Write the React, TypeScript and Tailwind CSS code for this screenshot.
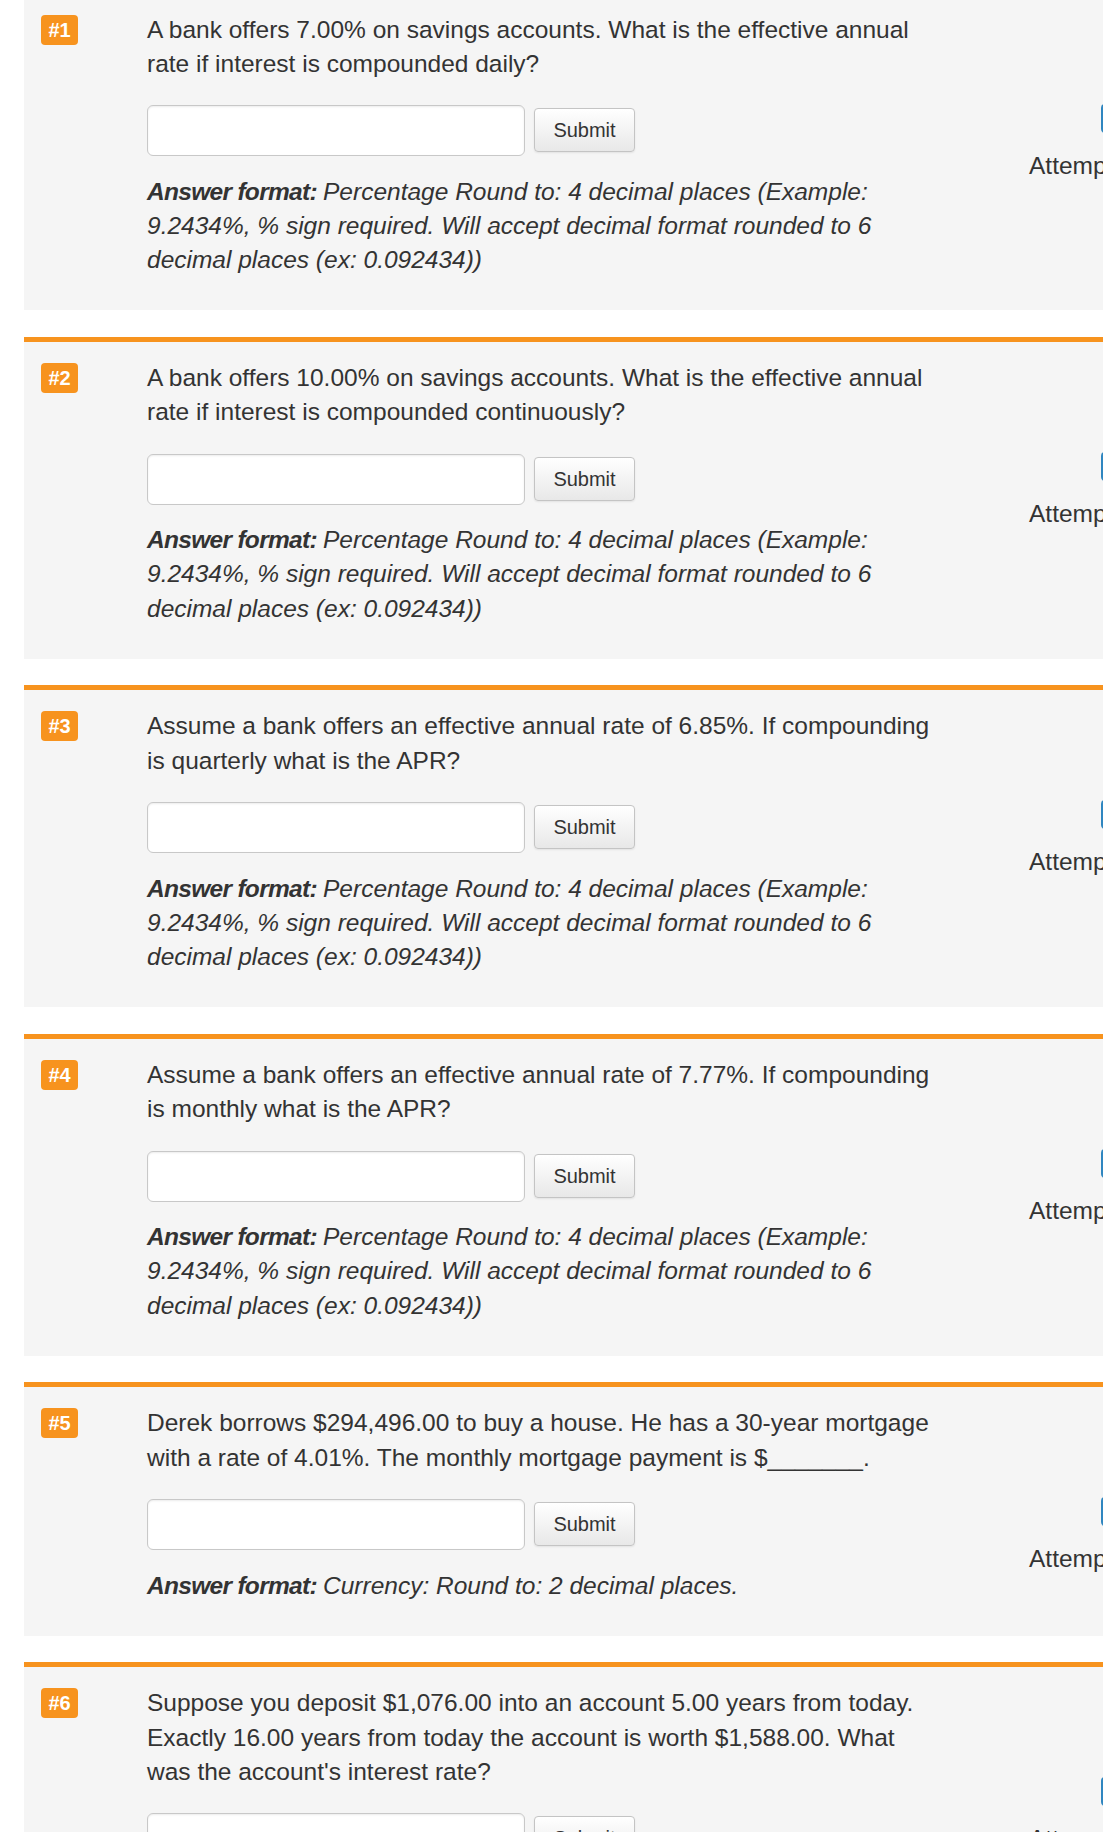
import React from "react";

type Q = {
  n: number;
  q: string[];
  a: string[];
};

const pct = [
  "Percentage Round to: 4 decimal places (Example:",
  "9.2434%, % sign required. Will accept decimal format rounded to 6",
  "decimal places (ex: 0.092434))",
];

const questions: Q[] = [
  {
    n: 1,
    q: [
      "A bank offers 7.00% on savings accounts. What is the effective annual",
      "rate if interest is compounded daily?",
    ],
    a: pct,
  },
  {
    n: 2,
    q: [
      "A bank offers 10.00% on savings accounts. What is the effective annual",
      "rate if interest is compounded continuously?",
    ],
    a: pct,
  },
  {
    n: 3,
    q: [
      "Assume a bank offers an effective annual rate of 6.85%. If compounding",
      "is quarterly what is the APR?",
    ],
    a: pct,
  },
  {
    n: 4,
    q: [
      "Assume a bank offers an effective annual rate of 7.77%. If compounding",
      "is monthly what is the APR?",
    ],
    a: pct,
  },
  {
    n: 5,
    q: [
      "Derek borrows $294,496.00 to buy a house. He has a 30-year mortgage",
      "with a rate of 4.01%. The monthly mortgage payment is $_______.",
    ],
    a: ["Currency: Round to: 2 decimal places."],
  },
  {
    n: 6,
    q: [
      "Suppose you deposit $1,076.00 into an account 5.00 years from today.",
      "Exactly 16.00 years from today the account is worth $1,588.00. What",
      "was the account's interest rate?",
    ],
    a: pct,
  },
];

function Card({ item }: { item: Q }) {
  return (
    <div className="w-[1240px] mb-[26.5px]">
      <div className="h-[5px] bg-[#f7931e]" />
      <div className="bg-[#f5f5f5] flex pt-[19px] pb-[33px]">
        <div className="w-[123px] pl-[17px] shrink-0">
          <div className="mt-[2px] w-[37px] h-[30px] rounded-[4px] bg-[#f7931e] text-white font-bold text-[20px] leading-[30px] text-center">
            #{item.n}
          </div>
        </div>
        <div className="w-[790px] shrink-0">
          <div className="text-[24.5px] leading-[34.3px] text-[#333333] whitespace-nowrap">
            {item.q.map((l, i) => (
              <div key={i}>{l}</div>
            ))}
          </div>
          <div className="mt-[24px] flex items-start">
            <input
              type="text"
              className="w-[378px] h-[51px] bg-white border border-[#c8c8c8] rounded-[6px] shadow-[inset_0_1px_2px_rgba(0,0,0,0.08)] outline-none"
            />
            <button className="ml-[9px] mt-[3px] w-[101px] h-[44px] rounded-[4px] border border-[#c4c4c4] bg-gradient-to-b from-white to-[#e8e8e8] text-[20px] text-[#333333] shadow-[0_1px_2px_rgba(0,0,0,0.08)]">
              Submit
            </button>
          </div>
          <div className="mt-[18.5px] text-[24.5px] leading-[34.3px] text-[#333333] italic whitespace-nowrap">
            {item.a.map((l, i) => (
              <div key={i}>
                {i === 0 && (
                  <span className="font-bold tracking-[-0.7px]">Answer format: </span>
                )}
                {l}
              </div>
            ))}
          </div>
        </div>
        <div className="ml-[92px] pt-[91px] shrink-0">
          <div className="pl-[72px]">
            <div className="w-[90px] h-[29px] rounded-[4px] border-2 border-[#2f86c0] bg-white" />
          </div>
          <div className="mt-[16px] text-[24.5px] leading-[34.3px] text-[#333333] whitespace-nowrap">
            Attempt 1/10
          </div>
        </div>
      </div>
    </div>
  );
}

export default function App() {
  return (
    <div
      className="w-full h-[1832px] overflow-hidden bg-white"
      style={{ fontFamily: '"Liberation Sans", Arial, Helvetica, sans-serif' }}
    >
      <div className="pl-[24px] mt-[-11.5px]">
        {questions.map((q) => (
          <Card key={q.n} item={q} />
        ))}
      </div>
    </div>
  );
}
